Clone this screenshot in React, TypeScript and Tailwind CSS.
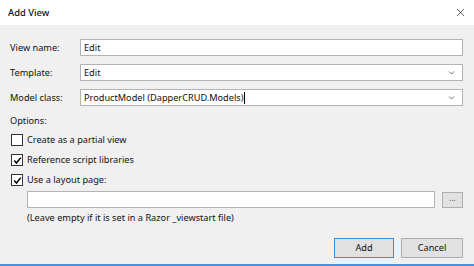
import { X } from "lucide-react";

function Chevron() {
  return (
    <svg width="7" height="5" viewBox="0 0 7 5" className="shrink-0">
      <path d="M1 1.5 L3.5 4 L6 1.5" fill="none" stroke="#707070" strokeWidth="1" />
    </svg>
  );
}

function CheckBox({ checked }: { checked: boolean }) {
  return (
    <div className="w-[12px] h-[12px] border border-[#333333] bg-white flex items-center justify-center shrink-0">
      {checked && (
        <svg width="9" height="9" viewBox="0 0 9 9">
          <path d="M1.2 4.6 L3.5 7 L7.8 1.6" fill="none" stroke="#000" strokeWidth="1.5" />
        </svg>
      )}
    </div>
  );
}

export default function App() {
  const options = [
    { label: "Create as a partial view", checked: false },
    { label: "Reference script libraries", checked: true },
    { label: "Use a layout page:", checked: true },
  ];

  return (
    <div className="w-[474px] h-[266px] flex flex-col bg-[#f0f0f0] border-b-2 border-[#4a90d9] text-[9.2px] leading-[16px] text-[#111] font-['Noto_Sans',sans-serif] overflow-hidden">
      {/* Title bar */}
      <div className="h-[25px] bg-white flex items-center justify-between pl-[8px] pr-[7px] shrink-0">
        <span className="text-[9.4px] font-medium">Add View</span>
        <X className="w-[13px] h-[13px] text-[#222]" strokeWidth={1.3} />
      </div>

      <div className="flex-1 flex flex-col pl-[10px] pr-[11px] pt-[14px]">
        {/* Fields */}
        <div className="flex flex-col gap-2">
          <div className="flex items-center">
            <span className="w-[70px] shrink-0">View name:</span>
            <div className="flex-1 h-[17px] bg-white border border-[#b4b4b4] flex items-center px-[3px]">
              Edit
            </div>
          </div>
          <div className="flex items-center">
            <span className="w-[70px] shrink-0">Template:</span>
            <div className="flex-1 h-[17px] bg-white border border-[#b4b4b4] flex items-center justify-between px-[3px] pr-[7px]">
              <span>Edit</span>
              <Chevron />
            </div>
          </div>
          <div className="flex items-center">
            <span className="w-[70px] shrink-0">Model class:</span>
            <div className="flex-1 h-[17px] bg-white border border-[#b4b4b4] flex items-center justify-between px-[3px] pr-[7px]">
              <span className="flex items-center">
                ProductModel (DapperCRUD.Models)
                <span className="w-px h-[12px] bg-black ml-px" />
              </span>
              <Chevron />
            </div>
          </div>
        </div>

        {/* Options */}
        <div className="mt-[7px]">Options:</div>
        <div className="flex flex-col mt-px">
          {options.map((o) => (
            <div key={o.label} className="h-[20px] flex items-center gap-[4px] pl-px">
              <CheckBox checked={o.checked} />
              <span>{o.label}</span>
            </div>
          ))}
        </div>

        <div className="pl-[17px] mt-px">
          <div className="flex items-center gap-[7px]">
            <div className="flex-1 h-[17px] bg-white border border-[#b4b4b4]" />
            <div className="w-[21px] h-[16px] bg-[#e1e1e1] border border-[#adadad] flex items-center justify-center text-[8px] leading-none text-[#555] pb-[3px]">
              ...
            </div>
          </div>
          <div className="mt-[2px]">(Leave empty if it is set in a Razor _viewstart file)</div>
        </div>

        {/* Buttons */}
        <div className="flex justify-end gap-[7px] mt-[12px]">
          <div className="w-[60px] h-[20px] bg-[#e1e1e1] border border-[#3c8bd6] flex items-center justify-center">
            Add
          </div>
          <div className="w-[62px] h-[20px] bg-[#e1e1e1] border border-[#adadad] flex items-center justify-center">
            Cancel
          </div>
        </div>
      </div>
    </div>
  );
}
